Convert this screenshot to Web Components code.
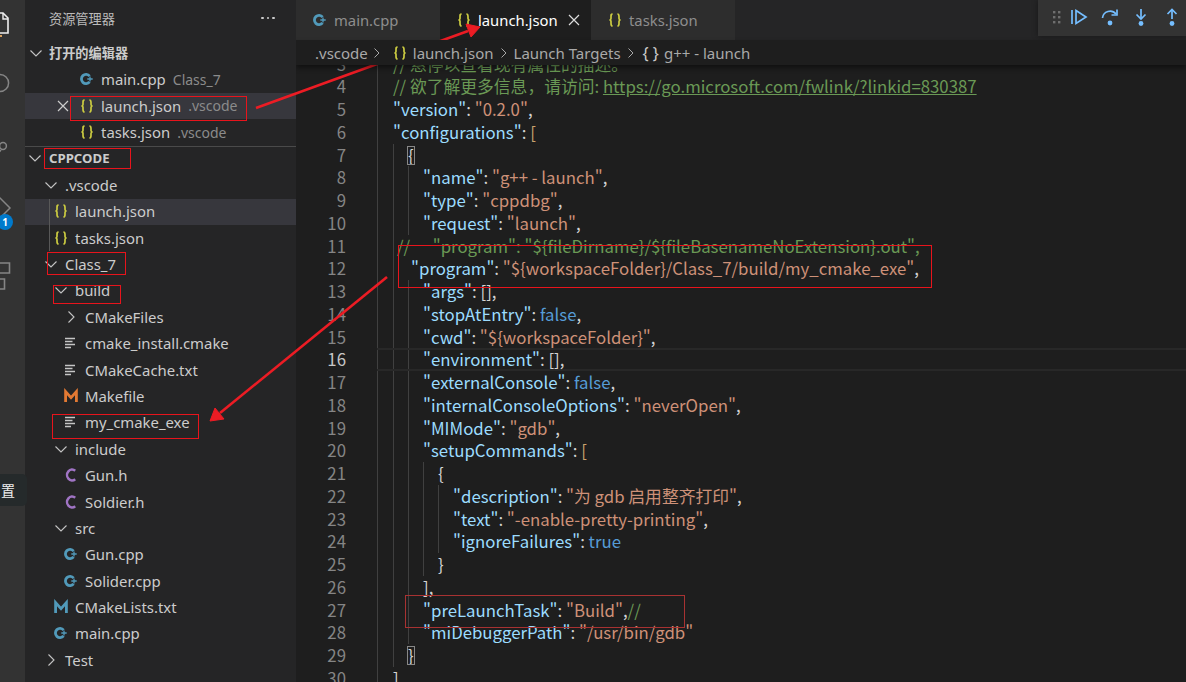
<!DOCTYPE html>
<html lang="zh"><head><meta charset="utf-8"><title>launch.json</title>
<style>html,body{margin:0;padding:0;background:#1e1e1e;overflow:hidden}</style>
</head><body>
<template id="t-app"><style>
:host{display:grid;grid-template-columns:25px 271px 1fr;width:1186px;height:682px;overflow:hidden;position:relative;font-family:"Noto Sans","Noto Sans CJK SC",sans-serif;background:#1e1e1e}
</style><slot></slot></template>

<vs-app>
  <activity-bar></activity-bar>
  <side-bar>
    <tree-section label="打开的编辑器"></tree-section>
    <tree-row x="101" icon="cpp" desc="Class_7">main.cpp</tree-row>
    <tree-row x="101" icon="json" desc=".vscode" active close>launch.json</tree-row>
    <tree-row x="101" icon="json" desc=".vscode">tasks.json</tree-row>
    <tree-row x="49" icon="down" bold topline>CPPCODE</tree-row>
    <tree-row x="65" icon="down">.vscode</tree-row>
    <tree-row x="75" icon="json" active guide>launch.json</tree-row>
    <tree-row x="75" icon="json" guide>tasks.json</tree-row>
    <tree-row x="65" icon="down">Class_7</tree-row>
    <tree-row x="75" icon="down">build</tree-row>
    <tree-row x="85" icon="right">CMakeFiles</tree-row>
    <tree-row x="85" icon="lines">cmake_install.cmake</tree-row>
    <tree-row x="85" icon="lines">CMakeCache.txt</tree-row>
    <tree-row x="85" icon="mo">Makefile</tree-row>
    <tree-row x="85" icon="lines">my_cmake_exe</tree-row>
    <tree-row x="75" icon="down">include</tree-row>
    <tree-row x="85" icon="c">Gun.h</tree-row>
    <tree-row x="85" icon="c">Soldier.h</tree-row>
    <tree-row x="75" icon="down">src</tree-row>
    <tree-row x="85" icon="cpp">Gun.cpp</tree-row>
    <tree-row x="85" icon="cpp">Solider.cpp</tree-row>
    <tree-row x="75" icon="mb">CMakeLists.txt</tree-row>
    <tree-row x="75" icon="cpp">main.cpp</tree-row>
    <tree-row x="65" icon="right">Test</tree-row>
  </side-bar>
  <editor-pane>
    <tab-bar>
      <editor-tab w="144" icon="cpp">main.cpp</editor-tab>
      <editor-tab w="151" icon="json" active>launch.json</editor-tab>
      <editor-tab w="144" icon="json">tasks.json</editor-tab>
    </tab-bar>
    <bread-crumbs></bread-crumbs>
    <code-view>
      <code-line n="3" g="1" i="16"><c-c>// 悬停以查看现有属性的描述。</c-c></code-line>
      <code-line n="4" g="1" i="16"><c-c>// 欲了解更多信息，请访问: <u>https://go.microsoft.com/fwlink/?linkid=830387</u></c-c></code-line>
      <code-line n="5" g="1" i="16"><c-k>"version"</c-k>: <c-s>"0.2.0"</c-s>,</code-line>
      <code-line n="6" g="1" i="16"><c-k>"configurations"</c-k>: <c-y>[</c-y></code-line>
      <code-line n="7" g="2" i="31"><c-m>{</c-m></code-line>
      <code-line n="8" g="3" i="46"><c-k>"name"</c-k>: <c-s>"g++ - launch"</c-s>,</code-line>
      <code-line n="9" g="3" i="46"><c-k>"type"</c-k>: <c-s>"cppdbg"</c-s>,</code-line>
      <code-line n="10" g="3" i="46"><c-k>"request"</c-k>: <c-s>"launch"</c-s>,</code-line>
      <code-line n="11" g="2" i="20"><c-c>//&nbsp;&nbsp;&nbsp;&nbsp;&nbsp;&nbsp;"program": "${fileDirname}/${fileBasenameNoExtension}.out",</c-c></code-line>
      <code-line n="12" g="2" i="34"><c-k>"program"</c-k>: <c-s>"${workspaceFolder}/Class_7/build/my_cmake_exe"</c-s>,</code-line>
      <code-line n="13" g="3" i="46"><c-k>"args"</c-k>: [],</code-line>
      <code-line n="14" g="3" i="46"><c-k>"stopAtEntry"</c-k>: <c-b>false</c-b>,</code-line>
      <code-line n="15" g="3" i="46"><c-k>"cwd"</c-k>: <c-s>"${workspaceFolder}"</c-s>,</code-line>
      <code-line n="16" g="3" i="46" cur><c-k>"environment"</c-k>: [],</code-line>
      <code-line n="17" g="3" i="46"><c-k>"externalConsole"</c-k>: <c-b>false</c-b>,</code-line>
      <code-line n="18" g="3" i="46"><c-k>"internalConsoleOptions"</c-k>: <c-s>"neverOpen"</c-s>,</code-line>
      <code-line n="19" g="3" i="46"><c-k>"MIMode"</c-k>: <c-s>"gdb"</c-s>,</code-line>
      <code-line n="20" g="3" i="46"><c-k>"setupCommands"</c-k>: <c-y>[</c-y></code-line>
      <code-line n="21" g="4" i="61">{</code-line>
      <code-line n="22" g="5" i="76"><c-k>"description"</c-k>: <c-s>"为 gdb 启用整齐打印"</c-s>,</code-line>
      <code-line n="23" g="5" i="76"><c-k>"text"</c-k>: <c-s>"-enable-pretty-printing"</c-s>,</code-line>
      <code-line n="24" g="5" i="76"><c-k>"ignoreFailures"</c-k>: <c-b>true</c-b></code-line>
      <code-line n="25" g="4" i="61">}</code-line>
      <code-line n="26" g="3" i="46">],</code-line>
      <code-line n="27" g="3" i="46"><c-k>"preLaunchTask"</c-k>: <c-s>"Build"</c-s>,<c-c>//</c-c></code-line>
      <code-line n="28" g="3" i="46"><c-k>"miDebuggerPath"</c-k>: <c-s>"/usr/bin/gdb"</c-s></code-line>
      <code-line n="29" g="2" i="31"><c-m>}</c-m></code-line>
      <code-line n="30" g="1" i="16">]</code-line>
    </code-view>
  </editor-pane>
  <debug-toolbar></debug-toolbar>
  <hover-tip>置</hover-tip>
  <red-marks></red-marks>
</vs-app>

<script>
const ICONS={
 cpp:'<g fill="none" stroke="#519aba"><path d="M10.6 5.1A4.6 4.6 0 1 0 10.6 10.9" stroke-width="2.8"/><path d="M8.3 8h5.4M11 5.6v4.8" stroke-width="1.3"/></g>',
 json:'<g fill="none" stroke="#cbcb41" stroke-width="1.7"><path d="M5.6 2C4 2 4 3 4 4.5V6.4C4 7.4 3.4 8 2.4 8C3.4 8 4 8.6 4 9.6V11.5C4 13 4 14 5.6 14"/><path d="M10.4 2C12 2 12 3 12 4.5V6.4C12 7.4 12.6 8 13.6 8C12.6 8 12 8.6 12 9.6V11.5C12 13 12 14 10.4 14"/></g>',
 down:'<path d="M2.5 5.5L8 11L13.5 5.5" fill="none" stroke="#c5c5c5" stroke-width="1.1"/>',
 right:'<path d="M5.5 2.5L11 8L5.5 13.5" fill="none" stroke="#c5c5c5" stroke-width="1.1"/>',
 lines:'<path d="M2 3.5h10M2 6.5h7.5M2 9.5h10M2 12.5h6" fill="none" stroke="#c5c5c5" stroke-width="1.3"/>',
 mo:'<path d="M2.6 14V3.6L8 9.6L13.4 3.6V14" fill="none" stroke="#e37933" stroke-width="2.8" stroke-linejoin="miter"/>',
 mb:'<path d="M2.6 14V3.6L8 9.6L13.4 3.6V14" fill="none" stroke="#519aba" stroke-width="2.8" stroke-linejoin="miter"/>',
 c:'<path d="M12.2 3.8A5 5.4 0 1 0 12.2 12.2" fill="none" stroke="#a074c4" stroke-width="2.5"/>'
};
const icon=(n,s=16)=>`<svg width="${s}" height="${s}" viewBox="0 0 16 16" aria-hidden="true">${ICONS[n]}</svg>`;
const attach=(el,html)=>{el.attachShadow({mode:'open'}).innerHTML=html};

class VsApp extends HTMLElement{constructor(){super();this.attachShadow({mode:'open'}).appendChild(document.getElementById('t-app').content.cloneNode(true))}}
customElements.define('vs-app',VsApp);

class ActivityBar extends HTMLElement{connectedCallback(){if(this.shadowRoot)return;attach(this,`<style>
:host{display:block;background:#333;height:682px;overflow:hidden;position:relative}
svg{display:block}
.badge{position:absolute;left:-3px;top:214px;width:16px;height:16px;border-radius:50%;background:#007acc;color:#fff;font:700 10px/16px "Noto Sans",sans-serif;text-align:center}
</style><svg width="25" height="300" viewBox="0 0 25 300" fill="none">
<path d="M-4 13H3L8 18V33H-4" stroke="#eeeeee" stroke-width="1.6"/><path d="M3 13V19H8" stroke="#eeeeee" stroke-width="1.4"/>
<path d="M-1 36H2" stroke="#d9a05b" stroke-width="2"/>
<circle cx="0" cy="83" r="8.6" stroke="#858585" stroke-width="1.5"/>
<circle cx="3" cy="146" r="3.4" stroke="#858585" stroke-width="1.5"/><path d="M1 150L-4 156" stroke="#858585" stroke-width="1.5"/>
<path d="M-2 196L10 208L-2 220" stroke="#858585" stroke-width="1.5"/>
<path d="M-2 263H9.5V273H-2" stroke="#858585" stroke-width="1.6"/><path d="M-2 279H4.5V289H-2" stroke="#858585" stroke-width="1.6"/>
</svg><div class="badge">1</div>`)}}
customElements.define('activity-bar',ActivityBar);

class HoverTip extends HTMLElement{connectedCallback(){if(this.shadowRoot)return;attach(this,`<style>
:host{position:absolute;left:0;top:474px;width:27px;height:32px;background:#252a2b;border-radius:0 5px 5px 0;display:flex;align-items:center;color:#eee;font:14px "Noto Sans CJK SC",sans-serif;padding-left:1px;box-sizing:border-box}
</style><slot></slot>`)}}
customElements.define('hover-tip',HoverTip);

class SideBar extends HTMLElement{connectedCallback(){if(this.shadowRoot)return;attach(this,`<style>
:host{display:block;background:#252526;height:682px;overflow:hidden;color:#ccc}
header{height:40.2px;display:flex;align-items:center;justify-content:space-between;padding:0 21px 4px 24px;box-sizing:border-box;font:13.2px "Noto Sans CJK SC",sans-serif;color:#bbb}
.dots{display:flex;gap:3px}.dots i{width:2.6px;height:2.6px;border-radius:50%;background:#ccc}
</style><header><span>资源管理器</span><span class="dots"><i></i><i></i><i></i></span></header><slot></slot>`)}}
customElements.define('side-bar',SideBar);

class TreeSection extends HTMLElement{connectedCallback(){if(this.shadowRoot)return;attach(this,`<style>
:host{display:flex;align-items:center;height:26.4px;padding-left:3px;font:700 13.2px "Noto Sans CJK SC",sans-serif;color:#ccc}
svg{margin-right:5px;flex:none}
span{position:relative;top:-1px}
</style>${icon('down')}<span>${this.getAttribute('label')}</span>`)}}
customElements.define('tree-section',TreeSection);

class TreeRow extends HTMLElement{connectedCallback(){if(this.shadowRoot)return;
 const x=+this.getAttribute('x'),n=this.getAttribute('icon');
 const active=this.hasAttribute('active'),guide=this.hasAttribute('guide'),bold=this.hasAttribute('bold');
 const bg=[];if(guide)bg.push('linear-gradient(#585858,#585858) 24px 0/1px 100% no-repeat');
 const desc=this.getAttribute('desc');
 attach(this,`<style>
:host{display:flex;align-items:center;height:26.4px;box-sizing:border-box;padding:0 0 1px ${x-25-22}px;position:relative;white-space:nowrap;
 font:${bold?'700 13.2px':'14.9px'} "Noto Sans",sans-serif;color:#ccc;
 background:${bg.concat(active?['#37373d']:[]).join(',')||'none'};
 ${this.hasAttribute('topline')?'box-shadow:inset 0 1px #4a4a4a;':''}}
svg{flex:none;margin-right:6px}
.d{color:#8b8b8b;font-size:14px;margin-left:7px}
.x{position:absolute;left:31px;top:6px}
</style>${icon(n)}<slot></slot>${desc?`<span class="d">${desc}</span>`:''}${this.hasAttribute('close')?`<svg class="x" width="14" height="14" viewBox="0 0 14 14"><path d="M2 2L12 12M12 2L2 12" stroke="#ccc" stroke-width="1.2"/></svg>`:''}`)}}
customElements.define('tree-row',TreeRow);

class EditorPane extends HTMLElement{connectedCallback(){if(this.shadowRoot)return;attach(this,`<style>
:host{display:flex;flex-direction:column;height:682px;overflow:hidden;min-width:0}
</style><slot></slot>`)}}
customElements.define('editor-pane',EditorPane);

class TabBar extends HTMLElement{connectedCallback(){if(this.shadowRoot)return;attach(this,`<style>
:host{display:flex;height:40px;background:#252526;flex:none}
</style><slot></slot>`)}}
customElements.define('tab-bar',TabBar);

class EditorTab extends HTMLElement{connectedCallback(){if(this.shadowRoot)return;
 const a=this.hasAttribute('active');
 attach(this,`<style>
:host{display:flex;align-items:center;width:${this.getAttribute('w')}px;box-sizing:border-box;padding-left:16px;background:${a?'#1e1e1e':'#2d2d2d'};color:${a?'#fff':'#8e8e8e'};font:14.8px "Noto Sans",sans-serif}
svg.i{margin-right:6px;flex:none}
.x{margin-left:auto;margin-right:10px}
</style>${icon(this.getAttribute('icon'))}<slot></slot>${a?`<svg class="x" width="14" height="14" viewBox="0 0 14 14"><path d="M2 2L12 12M12 2L2 12" stroke="#ddd" stroke-width="1.2"/></svg>`:''}`);
 this.shadowRoot.querySelector('svg').classList.add('i');}}
customElements.define('editor-tab',EditorTab);

class BreadCrumbs extends HTMLElement{connectedCallback(){if(this.shadowRoot)return;
 const sep=(l=4,r=4)=>`<svg style="margin:0 ${r}px 0 ${l}px" width="12" height="12" viewBox="0 0 12 12"><path d="M3.5 1.5L8 6L3.5 10.5" fill="none" stroke="#a9a9a9" stroke-width="1"/></svg>`;
 attach(this,`<style>
:host{display:flex;align-items:center;height:25px;flex:none;background:#1e1e1e;padding-left:19px;color:#a9a9a9;font:15px "Noto Sans",sans-serif;box-shadow:0 3px 5px rgba(0,0,0,.45);position:relative;z-index:1;white-space:nowrap}
svg{flex:none}
.b{font:16px "Noto Sans",sans-serif;margin:0 5px 0 2px;color:#ccc}
</style><span>.vscode</span>${sep(3,9)}${icon('json')}<span style="margin-left:5px">launch.json</span>${sep()}<span>Launch Targets</span>${sep()}<span class="b">{ }</span><span>g++ - launch</span>`)}}
customElements.define('bread-crumbs',BreadCrumbs);

class CodeView extends HTMLElement{connectedCallback(){if(this.shadowRoot)return;attach(this,`<style>
:host{display:block;flex:1;overflow:hidden;min-height:0}
.in{margin-top:-12.5px}
</style><div class="in"><slot></slot></div>`)}}
customElements.define('code-view',CodeView);

class CodeLine extends HTMLElement{connectedCallback(){if(this.shadowRoot)return;
 const g=+this.getAttribute('g'),cur=this.hasAttribute('cur');
 const pos=[0,16,31,46,61].slice(0,g);
 const guides=pos.map(p=>`linear-gradient(#404040,#404040) ${p}px 0/1px 100% no-repeat`).join(',');
 attach(this,`<style>
:host{display:flex;height:22.76px;font:16.8px/22.76px "Noto Sans CJK SC",sans-serif;color:#d4d4d4;white-space:nowrap}
.n{flex:none;width:50px;margin-right:31px;text-align:right;color:${cur?'#c6c6c6':'#858585'}}
.c{flex:1;box-sizing:border-box;padding-left:${this.getAttribute('i')}px;background:${guides};${cur?'box-shadow:inset 0 2px #282828,inset 0 -2px #282828;':''}}
</style><span class="n">${this.getAttribute('n')}</span><div class="c"><slot></slot></div>`)}}
customElements.define('code-line',CodeLine);

const tok=(name,css)=>customElements.define(name,class extends HTMLElement{connectedCallback(){if(this.shadowRoot)return;attach(this,`<style>:host{${css}}</style><slot></slot>`)}});
tok('c-k','color:#9cdcfe');
tok('c-s','color:#ce9178');
tok('c-c','color:#6a9955');
tok('c-b','color:#569cd6');
tok('c-y','color:#c9a26d');
tok('c-m','display:inline-block;line-height:19px;outline:1px solid #888;outline-offset:-1px;padding:0 1px;margin:0 -1px');

class DebugToolbar extends HTMLElement{connectedCallback(){if(this.shadowRoot)return;attach(this,`<style>
:host{position:absolute;left:1038px;top:0;width:148px;height:36px;background:#333;box-shadow:0 0 6px rgba(0,0,0,.4);display:flex;align-items:center;padding:0 0 2px 15px;box-sizing:border-box;gap:9px}
svg{flex:none;display:block}
.grip{margin-right:-2px}
</style>
<svg class="grip" width="8" height="16" viewBox="0 0 8 16" fill="#6e6e6e"><rect x="0" y="2" width="2.4" height="2.4"/><rect x="5" y="2" width="2.4" height="2.4"/><rect x="0" y="7" width="2.4" height="2.4"/><rect x="5" y="7" width="2.4" height="2.4"/><rect x="0" y="12" width="2.4" height="2.4"/><rect x="5" y="12" width="2.4" height="2.4"/></svg>
<svg width="22" height="22" viewBox="0 0 22 22" fill="none" stroke="#75beff" stroke-width="1.7"><path d="M4 4V18"/><path d="M8 4.5L18 11L8 17.5Z"/></svg>
<svg width="22" height="22" viewBox="0 0 22 22" fill="none" stroke="#75beff" stroke-width="1.7"><path d="M3.5 12A7.6 7.6 0 0 1 17 8"/><path d="M18 3.5V9H12.5"/><circle cx="11" cy="17" r="2.4" fill="#75beff" stroke="none"/></svg>
<svg width="22" height="22" viewBox="0 0 22 22" fill="none" stroke="#75beff" stroke-width="1.7"><path d="M11 3V12.5"/><path d="M6.5 8.5L11 13L15.5 8.5"/><circle cx="11" cy="17.5" r="2.4" fill="#75beff" stroke="none"/></svg>
<svg width="22" height="22" viewBox="0 0 22 22" fill="none" stroke="#75beff" stroke-width="1.7"><path d="M11 13V3.5"/><path d="M6.5 8L11 3.5L15.5 8"/><circle cx="11" cy="17.5" r="2.4" fill="#75beff" stroke="none"/></svg>`)}}
customElements.define('debug-toolbar',DebugToolbar);

class RedMarks extends HTMLElement{connectedCallback(){if(this.shadowRoot)return;
 const boxes=[[70.5,96.5,176,24],[44.5,148.5,86,20],[47.5,252.5,78,22],[53.5,285.5,67,18],[52.5,414.5,146,24],[398.5,245.5,533,42]];
 attach(this,`<style>
:host{position:absolute;left:0;top:0;width:1186px;height:682px;pointer-events:none}svg{display:block}
</style><svg width="1186" height="682" viewBox="0 0 1186 682" fill="none">
${boxes.map(b=>`<rect x="${b[0]}" y="${b[1]}" width="${b[2]}" height="${b[3]}" stroke="#e8141c"/>`).join('')}
<rect x="405.5" y="595.5" width="279" height="32" stroke="#a83232"/>
<path d="M256 108L468 31" stroke="#ec1c24" stroke-width="2.6"/><path d="M480 27L466 24L471 37Z" fill="#ec1c24" stroke="#ec1c24"/>
<path d="M387 277L220 413" stroke="#ec1c24" stroke-width="2.6"/><path d="M210 421L215 408L224 419Z" fill="#ec1c24" stroke="#ec1c24"/>
</svg>`)}}
customElements.define('red-marks',RedMarks);
</script>
</body></html>
